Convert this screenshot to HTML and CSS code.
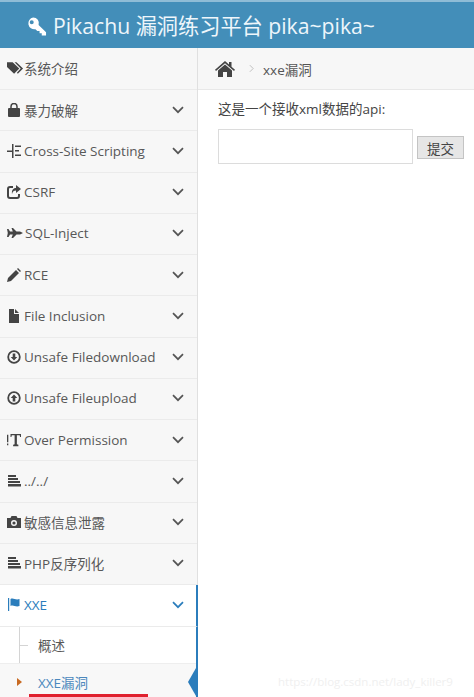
FILE: index.html
```html
<!DOCTYPE html>
<html lang="zh">
<head>
<meta charset="utf-8">
<title>Pikachu 漏洞练习平台</title>
<link rel="stylesheet" href="styles.css">
</head>
<body>
<svg class="defs" width="0" height="0" aria-hidden="true">
  <defs>
    <symbol id="chev" viewBox="0 0 12 8"><path d="M1 1.200 6 6.200l5-5" fill="none" stroke="currentColor" stroke-width="1.700"/></symbol>
  </defs>
</svg>
<header class="topbar">
  <svg class="key" viewBox="0 0 22 22"><path d="M7.500 1.500a6 6 0 0 1 5.700 7.900L21 17v3.500h-4.500v-2.400h-2.300v-2.400h-2.400l-1.900-1.900A6 6 0 1 1 7.500 1.500Zm-1.500 3a2.100 2.100 0 1 0 0 4.200 2.100 2.100 0 0 0 0-4.200Z" fill="currentColor" fill-rule="evenodd"/></svg>
  <span class="brand">Pikachu 漏洞练习平台 pika~pika~</span>
</header>
<div class="shell">
  <nav class="sidebar">
    <a class="row first">
      <svg class="ico" viewBox="0 0 18 14"><path d="M0 1h6l7 6.500L7.500 13 0 6Zm8 0h2l7 6.500-5.500 5.500-1-1 4-4.500Z" fill="currentColor"/></svg>
      <span>系统介绍</span>
    </a>
    <a class="row">
      <svg class="ico" viewBox="0 0 14 14"><path d="M4 5V3.500a3 3 0 0 1 6 0V5" fill="none" stroke="currentColor" stroke-width="1.500"/><rect x="1" y="5" width="12" height="9" rx="1" fill="currentColor"/></svg>
      <span>暴力破解</span><svg class="chev"><use href="#chev"/></svg>
    </a>
    <a class="row">
      <svg class="ico" viewBox="0 0 14 14"><path d="M5 0h1.500v14H5V8H0V6.500h5Zm3 1.500h6V3H8Zm0 4.500h4v1.500H8Zm0 4.500h6V12H8Z" fill="currentColor"/></svg>
      <span>Cross-Site Scripting</span><svg class="chev"><use href="#chev"/></svg>
    </a>
    <a class="row">
      <svg class="ico" viewBox="0 0 14 14"><path d="M6 2H3a2 2 0 0 0-2 2v7a2 2 0 0 0 2 2h7a2 2 0 0 0 2-2V9" fill="none" stroke="currentColor" stroke-width="2"/><path d="m9 0 5 4-5 4V5.500C7 5.500 5.500 6.500 5 9c-.5-3.500 1-6 4-6Z" fill="currentColor"/></svg>
      <span>CSRF</span><svg class="chev"><use href="#chev"/></svg>
    </a>
    <a class="row">
      <svg class="ico wide" viewBox="0 0 16 10"><path d="M0 1h1.500l1.500 2.600h2.800L4.500 0H6l3.500 3.600h3.500L16 5l-3 1.400H9.500L6 10H4.500l1.300-3.600H3L1.500 9H0l.8-4Z" fill="currentColor"/></svg>
      <span>SQL-Inject</span><svg class="chev"><use href="#chev"/></svg>
    </a>
    <a class="row">
      <svg class="ico" viewBox="0 0 14 14"><path d="M0 14l1-4 8-8 3 3-8 8Zm10-13 1-1 3 3-1 1Z" fill="currentColor"/></svg>
      <span>RCE</span><svg class="chev"><use href="#chev"/></svg>
    </a>
    <a class="row">
      <svg class="ico" viewBox="0 0 14 14"><path d="M2 0h5v5h5v9H2ZM8 0l4 4H8Z" fill="currentColor"/></svg>
      <span>File Inclusion</span><svg class="chev"><use href="#chev"/></svg>
    </a>
    <a class="row">
      <svg class="ico" viewBox="0 0 14 14"><circle cx="7" cy="7" r="5.800" fill="none" stroke="currentColor" stroke-width="1.800"/><path d="M5.700 3.500h2.600v3.500h2L7 10.500 3.700 7h2Z" fill="currentColor"/></svg>
      <span>Unsafe Filedownload</span><svg class="chev"><use href="#chev"/></svg>
    </a>
    <a class="row">
      <svg class="ico" viewBox="0 0 14 14"><circle cx="7" cy="7" r="5.800" fill="none" stroke="currentColor" stroke-width="1.800"/><path d="M5.700 10.500h2.600V7h2L7 3.500 3.700 7h2Z" fill="currentColor"/></svg>
      <span>Unsafe Fileupload</span><svg class="chev"><use href="#chev"/></svg>
    </a>
    <a class="row">
      <svg class="ico" viewBox="0 0 16 14"><path d="M0 1h1.500v8.500H0Zm0 10h1.500v2H0ZM4 0h12v3.500h-1L14.500 1.500h-3.200v10.300l1.700.6V14H7v-1.600l1.700-.6V1.500H5.500L5 3.500H4Z" fill="currentColor"/></svg>
      <span>Over Permission</span><svg class="chev"><use href="#chev"/></svg>
    </a>
    <a class="row">
      <svg class="ico" viewBox="0 0 14 14"><path d="M1 1h8v2H1Zm0 3h10v2H1Zm0 3h12v2H1Zm0 3h13v2.500H1Z" fill="currentColor"/></svg>
      <span>../../</span><svg class="chev"><use href="#chev"/></svg>
    </a>
    <a class="row">
      <svg class="ico" viewBox="0 0 14 14"><path d="M0 3h3.500l1-2h5l1 2H14v10H0Zm7 2a3 3 0 1 0 0 6 3 3 0 0 0 0-6Z" fill="currentColor" fill-rule="evenodd"/><circle cx="7" cy="8" r="1.600" fill="currentColor"/></svg>
      <span>敏感信息泄露</span><svg class="chev"><use href="#chev"/></svg>
    </a>
    <a class="row">
      <svg class="ico" viewBox="0 0 14 14"><path d="M1 1h8v2H1Zm0 3h10v2H1Zm0 3h12v2H1Zm0 3h13v2.500H1Z" fill="currentColor"/></svg>
      <span>PHP反序列化</span><svg class="chev"><use href="#chev"/></svg>
    </a>
    <a class="row open">
      <svg class="ico" viewBox="0 0 14 14"><path d="M1 0h1.200v13H1ZM3.500 1c3-1.500 5 1.500 9 0v7c-4 1.500-6-1.500-9 0Z" fill="currentColor"/></svg>
      <span>XXE</span><svg class="chev"><use href="#chev"/></svg>
    </a>
    <div class="submenu">
      <a class="subrow"><i class="tick"></i><span>概述</span></a>
      <a class="subrow current"><i class="caret"></i><span>XXE漏洞</span><i class="notch"></i></a>
      <i class="redmark"></i>
    </div>
  </nav>
  <main class="content">
    <div class="crumbs">
      <svg class="home" viewBox="0 0 20 16"><path d="m10 0 4 3.500V1h2.500v4.700L20 8.700l-1 1.200-9-7.700-9 7.700-1-1.200Zm-7 9.500L10 3.500l7 6V16h-5v-5H8v5H3Z" fill="currentColor"/></svg>
      <svg class="sep" viewBox="0 0 6 10"><path d="m1 1 4 4-4 4" fill="none" stroke="currentColor"/></svg>
      <span>xxe漏洞</span>
    </div>
    <div class="panel">
      <p class="lead">这是一个接收xml数据的api:</p>
      <form class="form">
        <input class="field" type="text">
        <button class="submit" type="button">提交</button>
      </form>
    </div>
    <span class="mark">https://blog.csdn.net/lady_killer9</span>
  </main>
</div>
</body>
</html>
```
FILE: styles.css
```css
* { box-sizing: border-box; }
html, body { margin: 0; height: 100%; overflow: hidden; }
body {
  background: #fff;
  color: #585858;
  font-family: "Open Sans", "Noto Sans CJK SC", sans-serif;
  font-size: 13.5px;
}
.defs { position: absolute; }
.topbar {
  height: 48px;
  background: #438eb9;
  border-top: 2px solid #8fbcd6;
  color: #fff;
  display: flex;
  align-items: center;
  padding: 2px 0 0 26px;
  gap: 6px;
}
.key { width: 21px; height: 21px; }
.brand { font-size: 21.2px; line-height: 28px; color: #eef6fb; white-space: nowrap; }
.shell { display: flex; height: 649px; }
.sidebar {
  width: 198px;
  flex: none;
  background: #f7f7f7;
  border-right: 1px solid #e0e0e0;
  position: relative;
}
.row {
  height: 41.25px;
  display: flex;
  align-items: center;
  padding: 0 13px 1px 7px;
  border-bottom: 1px solid #ebebeb;
  color: #585858;
  white-space: nowrap;
}
.first { height: 42px; padding-bottom: 2px; }
.ico { width: 14px; height: 14px; flex: none; color: #444; margin-right: 3px; }
.ico.wide { width: 16px; height: 10px; margin-right: 2px; }
.first .ico { width: 17px; margin-right: 0; }
.row span { flex: 1; }
.chev { width: 12px; height: 8px; flex: none; color: #555; }
.open .ico, .open .chev { color: #2b7dbc; }
.row.open {
  height: 42px;
  background: #fff;
  color: #2b7dbc;
  margin-right: -1px;
  border-right: 2px solid #2b7dbc;
  padding-right: 12px;
}
.submenu {
  position: relative;
  background: #fff;
  margin-right: -1px;
  border-right: 2px solid #2b7dbc;
  height: 70px;
}
.submenu::before {
  content: "";
  position: absolute;
  left: 19px;
  top: 0;
  bottom: 0;
  border-left: 1px solid #d4d4d4;
}
.subrow {
  height: 37px;
  display: flex;
  align-items: center;
  padding: 0 0 1px 38px;
  position: relative;
  color: #585858;
  border-bottom: 1px solid #eee;
}
.current { color: #4b88bd; background: #f8f8f8; }
.tick {
  position: absolute;
  left: 20px;
  top: 18px;
  width: 8px;
  border-top: 1px solid #d4d4d4;
}
.caret {
  position: absolute;
  left: 17px;
  top: 14px;
  border-left: 5px solid #c86a22;
  border-top: 4px solid transparent;
  border-bottom: 4px solid transparent;
}
.notch {
  position: absolute;
  right: 0;
  top: 4px;
  border-right: 8px solid #2b7dbc;
  border-top: 14px solid transparent;
  border-bottom: 14px solid transparent;
}
.redmark {
  position: absolute;
  left: 29px;
  top: 67px;
  width: 119px;
  height: 3px;
  background: #e0202e;
}
.content { flex: 1; position: relative; min-width: 0; }
.crumbs {
  height: 42px;
  background: #f7f7f7;
  border-bottom: 1px solid #e8e8e8;
  display: flex;
  align-items: center;
  padding-left: 17px;
  color: #555;
  font-size: 13.5px;
}
.home { width: 20px; height: 16px; color: #444; }
.sep { width: 5px; height: 9px; color: #b5b5b5; margin: 0 9px 0 14px; }
.panel { padding: 10px 0 0 20px; }
.lead { margin: 0; line-height: 19px; color: #444; font-size: 13.5px; }
.form { display: flex; align-items: center; margin-top: 10px; gap: 4px; }
.field {
  width: 195px;
  height: 35px;
  border: 1px solid #dcdcdc;
  background: #fff;
  padding: 0;
  flex: none;
}
.submit {
  width: 47px;
  height: 23px;
  margin-top: 2px;
  padding: 0;
  flex: none;
  background: #e6e6e6;
  border: 1px solid #c4c4c4;
  color: #444;
  font: 13.5px "Noto Sans CJK SC", sans-serif;
}
.mark {
  position: absolute;
  left: 80px;
  top: 626px;
  font-size: 11.5px;
  color: #f0f0f0;
  white-space: nowrap;
}
```
